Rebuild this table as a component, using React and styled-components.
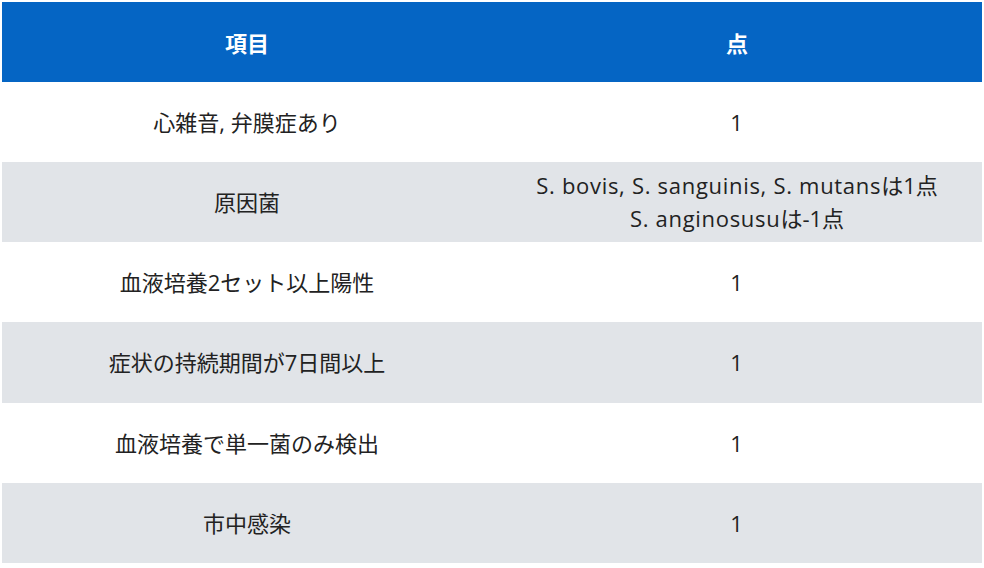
import React from 'react';
import styled, { createGlobalStyle } from 'styled-components';

const GlobalStyle = createGlobalStyle`
  body {
    margin: 0;
    background: #ffffff;
    font-family: "Open Sans", "Noto Sans CJK JP", sans-serif;
    color: #222222;
  }
`;

const Table = styled.table`
  margin: 2px;
  width: 980px;
  border-collapse: collapse;
  table-layout: fixed;
`;

const HeadCell = styled.th`
  height: 80px;
  padding: 0;
  background-color: #0565c4;
  color: #ffffff;
  font-size: 22px;
  font-weight: 700;
  text-align: center;
  vertical-align: middle;
`;

const Row = styled.tr`
  background-color: ${(p) => (p.$shaded ? '#e1e4e8' : '#ffffff')};
`;

const Cell = styled.td`
  height: ${(p) => p.$h || 80}px;
  padding: 0;
  font-size: 22px;
  line-height: 33px;
  text-align: center;
  vertical-align: middle;
`;

// latin runs are set a touch looser, like the reference's font
const Latin = styled.span`
  letter-spacing: 0.7px;
`;

const rows = [
  { item: '心雑音, 弁膜症あり', score: [['1', '']] },
  {
    item: '原因菌',
    score: [
      ['S. bovis, S. sanguinis, S. mutans', 'は1点'],
      ['S. anginosusu', 'は-1点'],
    ],
  },
  { item: '血液培養2セット以上陽性', score: [['1', '']] },
  { item: '症状の持続期間が7日間以上', score: [['1', '']] },
  { item: '血液培養で単一菌のみ検出', score: [['1', '']] },
  { item: '市中感染', score: [['1', '']] },
];

export default function App() {
  return (
    <>
      <GlobalStyle />
      <Table>
        <thead>
          <tr>
            <HeadCell>項目</HeadCell>
            <HeadCell>点</HeadCell>
          </tr>
        </thead>
        <tbody>
          {rows.map((r, i) => (
            <Row key={r.item} $shaded={i % 2 === 1}>
              <Cell $h={i === 3 ? 81 : 80}>{r.item}</Cell>
              <Cell $h={i === 3 ? 81 : 80}>
                {r.score.map(([latin, rest], j) => (
                  <div key={j}>
                    <Latin>{latin}</Latin>
                    {rest}
                  </div>
                ))}
              </Cell>
            </Row>
          ))}
        </tbody>
      </Table>
    </>
  );
}
